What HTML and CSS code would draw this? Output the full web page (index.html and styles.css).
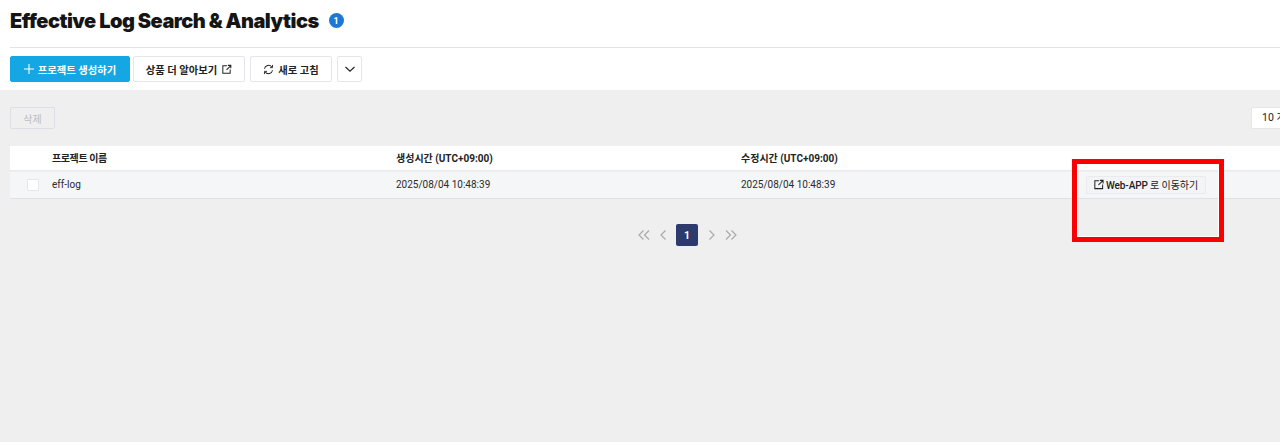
FILE: index.html
```html
<!DOCTYPE html>
<html lang="ko">
<head>
<meta charset="utf-8">
<title>Effective Log Search &amp; Analytics</title>
<link rel="stylesheet" href="styles.css">
</head>
<body>
<div class="page">
  <header class="header">
    <div class="title-row">
      <h1 class="title">Effective Log Search &amp; Analytics</h1>
      <span class="count">1</span>
    </div>
    <div class="actions">
      <button class="btn btn-primary">
        <svg class="icon" viewBox="0 0 12 12"><path d="M6 1v10M1 6h10" fill="none" stroke="#fff" stroke-width="1.1"/></svg>
        프로젝트 생성하기
      </button>
      <button class="btn btn-more">
        상품 더 알아보기
        <svg class="icon-sm" viewBox="0 0 12 12"><path d="M6.500 2H2v8h8V6M6 6.500 10.500 2M7.500 1.500h3.200v3.200" fill="none" stroke="#222" stroke-width="1.1"/></svg>
      </button>
      <button class="btn btn-refresh">
        <svg class="icon-sm" viewBox="0 0 12 12"><path d="M1.600 5.200A4.500 4.500 0 0 1 9.600 3.200M10.400 6.800A4.500 4.500 0 0 1 2.400 8.800" fill="none" stroke="#222" stroke-width="1.1"/><path d="M10.400 1v3H7.600M1.600 11V8h2.800" fill="none" stroke="#222" stroke-width="1"/></svg>
        새로 고침
      </button>
      <button class="btn btn-caret">
        <svg class="icon" viewBox="0 0 12 12"><path d="M1.500 4 6 8.200 10.500 4" fill="none" stroke="#222" stroke-width="1.2"/></svg>
      </button>
    </div>
  </header>
  <main class="content">
    <div class="toolbar">
      <button class="btn-delete">삭제</button>
      <div class="page-size">10 개씩 보기</div>
    </div>
    <div class="table">
      <div class="row head">
        <div class="cell-check"></div>
        <div class="cell-name"><span class="name-head">프로젝트 이름</span></div>
        <div class="cell-time">생성시간 (UTC+09:00)</div>
        <div class="cell-time">수정시간 (UTC+09:00)</div>
      </div>
      <div class="row body">
        <div class="cell-check"><span class="checkbox"></span></div>
        <div class="cell-name">eff-log</div>
        <div class="cell-time">2025/08/04 10:48:39</div>
        <div class="cell-time">2025/08/04 10:48:39</div>
        <button class="btn-app">
          <svg class="icon-sm" viewBox="0 0 12 12"><path d="M6.500 2H2v8.500h8.500V6M6 6.500 10.500 2M7.500 1.500h3.500v3.500" fill="none" stroke="#222" stroke-width="1.1"/></svg>
          <span class="app-label"><b>Web-APP</b> 로 이동하기</span>
        </button>
      </div>
    </div>
    <nav class="pager">
      <svg class="pg" viewBox="0 0 14 14"><path d="M6.500 2.500 2 7l4.500 4.500M12 2.500 7.500 7l4.500 4.500" fill="none" stroke="#aaa" stroke-width="1.2"/></svg>
      <svg class="pg" viewBox="0 0 14 14"><path d="M9.500 2.500 5 7l4.500 4.500" fill="none" stroke="#aaa" stroke-width="1.2"/></svg>
      <span class="pg-current">1</span>
      <svg class="pg" viewBox="0 0 14 14"><path d="M4.500 2.500 9 7l-4.500 4.500" fill="none" stroke="#aaa" stroke-width="1.2"/></svg>
      <svg class="pg" viewBox="0 0 14 14"><path d="M2 2.500 6.500 7 2 11.500M7.500 2.500 12 7l-4.500 4.500" fill="none" stroke="#aaa" stroke-width="1.2"/></svg>
    </nav>
  </main>
  <div class="annotation"></div>
</div>
</body>
</html>
```
FILE: styles.css
```css
* { box-sizing: border-box; }
html, body { margin: 0; height: 100%; overflow: hidden; }
body {
  font-family: Roboto, "Noto Sans CJK KR", sans-serif;
  font-size: 10px;
  color: #222;
  background: #efefef;
}
.page { position: relative; width: 1280px; height: 442px; overflow: hidden; }
button { font-family: inherit; cursor: pointer; }

.header { background: #fff; height: 90px; padding-left: 10px; }
.title-row {
  display: flex;
  align-items: center;
  height: 48px;
  padding-bottom: 6px;
  border-bottom: 1px solid #e3e3e3;
}
.title {
  margin: 0;
  font-family: Inter, sans-serif;
  font-size: 20px;
  font-weight: 900;
  letter-spacing: -0.53px;
  color: #151515;
}
.count {
  margin-left: 10px;
  width: 15px;
  height: 15px;
  border-radius: 50%;
  background: #1c78d4;
  color: #fff;
  font-size: 9px;
  font-weight: 700;
  display: flex;
  align-items: center;
  justify-content: center;
}

.actions { display: flex; gap: 3px; margin-top: 8px; }
.btn {
  height: 26px;
  display: flex;
  align-items: center;
  justify-content: center;
  gap: 4px;
  padding: 0;
  background: #fff;
  border: 1px solid #e4e6e9;
  border-radius: 2px;
  font-size: 10.300px;
  font-weight: 700;
  color: #222;
}
.btn-primary { width: 120px; gap: 3px; padding-right: 1px; background: #14a7e3; border-color: #14a7e3; color: #fff; }
.btn-more { width: 112px; }
.btn-refresh { width: 82px; margin-left: 2px; }
.btn-caret { width: 25px; margin-left: 2px; }
.icon { width: 12px; height: 12px; }
.icon-sm { width: 11px; height: 11px; flex: none; }

.content { width: 1354px; margin-left: 10px; padding-top: 17px; }
.toolbar { display: flex; justify-content: space-between; align-items: center; height: 22px; }
.btn-delete {
  width: 45px;
  height: 22px;
  padding: 0;
  background: #efefef;
  border: 1px solid #dcdfe3;
  border-radius: 2px;
  font-size: 10px;
  color: #bdbdbd;
}
.page-size {
  width: 60px;
  height: 22px;
  margin-right: 53px;
  padding-left: 10px;
  background: #fff;
  border: 1px solid #e6e6e6;
  border-radius: 2px;
  font-size: 10.500px;
  line-height: 20px;
  white-space: nowrap;
  overflow: hidden;
}

.table { margin-top: 17px; }
.row { display: flex; align-items: center; }
.row.head { height: 25px; padding-bottom: 2px; background: #fff; font-weight: 700; border-bottom: 1px solid #e9eaec; }
.row.body { height: 27px; margin-top: 1px; padding-bottom: 1px; background: #f5f6f8; border-bottom: 1px solid #e0e1e3; color: #2b2b2b; }
.cell-check { width: 42px; display: flex; justify-content: flex-end; padding-right: 13px; }
.checkbox { width: 12px; height: 12px; background: #fff; border: 1px solid #e6e7ea; border-radius: 1px; }
.cell-name { width: 344px; }
.name-head { letter-spacing: -0.4px; }
.cell-time { width: 345px; }
.btn-app {
  height: 18px;
  width: 120px;
  display: flex;
  align-items: center;
  gap: 2px;
  padding: 0 0 0 6px;
  background: #f3f4f6;
  border: 1px solid #e9ebee;
  border-radius: 2px;
  font-size: 10px;
  color: #222;
}
.app-label { letter-spacing: -0.1px; }
.btn-app b { font-weight: 500; }

.pager { display: flex; justify-content: center; align-items: center; margin-top: 25px; }
.pg { width: 14px; height: 14px; margin: 0 2.500px; }
.pg-current {
  width: 22px;
  height: 22px;
  margin: 0 4px;
  background: #2d3a6e;
  border-radius: 2px;
  color: #fff;
  font-size: 10.500px;
  font-weight: 700;
  display: flex;
  align-items: center;
  justify-content: center;
}

.annotation {
  position: absolute;
  left: 1072px;
  top: 159px;
  width: 152px;
  height: 83px;
  border: 5px solid #fb0000;
  box-shadow: inset 0 0 0 1px #fff;
}
```
